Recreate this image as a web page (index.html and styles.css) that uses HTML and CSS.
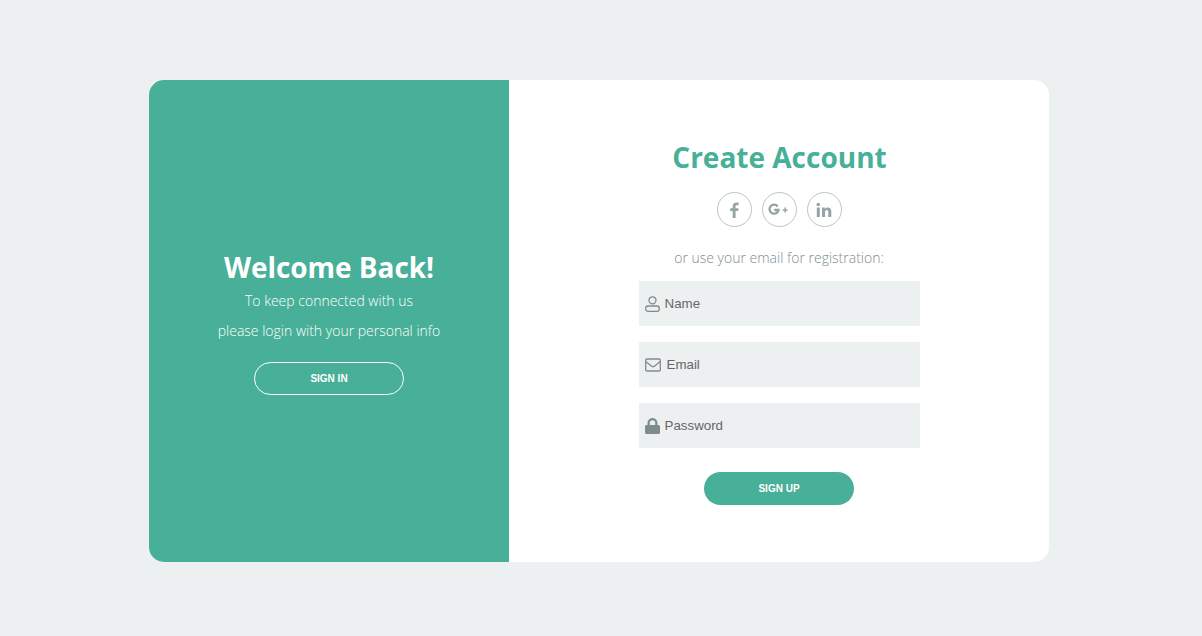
FILE: index.html
```html
<!DOCTYPE html>
<html lang="en">
<head>
<meta charset="utf-8">
<title>Create Account</title>
<link rel="stylesheet" href="styles.css">
</head>
<body>
<main class="card">
  <section class="welcome">
    <h2 class="welcome-title">Welcome Back!</h2>
    <p class="welcome-text">To keep connected with us</p>
    <p class="welcome-text">please login with your personal info</p>
    <button class="btn btn-ghost" type="button">SIGN IN</button>
  </section>
  <section class="signup">
    <h1 class="signup-title">Create Account</h1>
    <div class="socials">
      <a class="social" href="#" aria-label="Facebook">
        <svg viewBox="0 0 20 20" width="20" height="20"><path d="M11.6 18v-7h2.5l.4-2.8h-2.9V6.500c0-.8.3-1.300 1.400-1.300h1.600V2.700c-.3 0-1.200-.1-2.200-.1-2.200 0-3.700 1.300-3.700 3.700v1.900H6.200V11h2.500v7z"/></svg>
      </a>
      <a class="social" href="#" aria-label="Google Plus">
        <svg class="gplus" viewBox="0 0 22 22" width="22" height="22"><path d="M9.700 7.500A4.500 4.500 0 1 0 10.500 11H6.200"/><path d="M17.200 8.600v4.800M14.800 11h4.800" stroke-width="1.500"/></svg>
      </a>
      <a class="social" href="#" aria-label="LinkedIn">
        <svg viewBox="0 0 20 20" width="20" height="20"><circle cx="4.300" cy="4.500" r="1.800"/><path d="M2.800 7.600h3V17h-3zM8 7.600h2.900v1.300c.5-.9 1.600-1.500 2.900-1.500 2.700 0 3.500 1.700 3.500 4.300V17h-3v-4.700c0-1.200-.3-2.200-1.500-2.200-1.300 0-1.800 1-1.800 2.200V17H8z"/></svg>
      </a>
    </div>
    <p class="hint">or use your email for registration:</p>
    <form class="form">
      <label class="field">
        <svg class="field-icon" viewBox="0 0 15 16" width="15" height="16"><circle cx="7.500" cy="4.300" r="3.500"/><rect x=".7" y="10" width="13.600" height="5.300" rx="2.300"/></svg>
        <input class="field-input" type="text" placeholder="Name">
      </label>
      <label class="field">
        <svg class="field-icon field-icon-wide" viewBox="0 0 16 14" width="16" height="14"><rect x=".7" y="1" width="14.600" height="12" rx="1.300"/><path d="M1 3.800l5.700 4.400c.8.600 1.800.6 2.600 0L15 3.800"/></svg>
        <input class="field-input" type="email" placeholder="Email">
      </label>
      <label class="field">
        <svg class="field-icon-solid" viewBox="0 0 15 16" width="15" height="16"><path d="M2.500 7V5a5 5 0 0 1 10 0v2h1c.8 0 1.500.7 1.500 1.500v6c0 .8-.7 1.500-1.500 1.500H1.500C.7 16 0 15.300 0 14.500v-6C0 7.700.7 7 1.500 7zm2.300 0h5.400V5a2.700 2.700 0 0 0-5.400 0z"/></svg>
        <input class="field-input" type="password" placeholder="Password">
      </label>
      <button class="btn btn-solid" type="button">SIGN UP</button>
    </form>
  </section>
</main>
</body>
</html>
```

FILE: styles.css
```css
* { box-sizing: border-box; }

html, body { margin: 0; height: 100%; }

body {
  background: #ecf0f1;
  padding: 80px 0 0 149px;
  overflow: hidden;
  font-family: "Open Sans", sans-serif;
}

.card {
  display: flex;
  width: 900px;
  height: 482px;
  border-radius: 15px;
  overflow: hidden;
  background: #fff;
}

.welcome {
  flex: 0 0 360px;
  display: flex;
  flex-direction: column;
  align-items: center;
  padding-top: 168px;
  background: #48af98;
  color: #fff;
}

.welcome-title {
  margin: 0;
  font-size: 28px;
  line-height: 38px;
  font-weight: 700;
  letter-spacing: -0.05px;
}

.welcome-text {
  margin: 0;
  font-size: 14px;
  line-height: 30px;
  font-weight: 300;
}

.btn {
  display: block;
  width: 150px;
  height: 33px;
  padding: 0;
  border-radius: 17px;
  font-family: "Liberation Sans", Arial, sans-serif;
  font-size: 10px;
  font-weight: 700;
  color: #fff;
}

.btn-ghost {
  margin-top: 16px;
  background: transparent;
  border: 1px solid #fff;
}

.btn-solid {
  align-self: flex-start;
  margin: 8px 0 0 65px;
  background: #48af98;
  border: 0;
}

.signup {
  flex: 1;
  display: flex;
  flex-direction: column;
  align-items: center;
  padding-top: 56px;
}

.signup-title {
  margin: 0 0 0 1px;
  font-size: 28px;
  line-height: 42px;
  font-weight: 700;
  color: #48af98;
}

.socials {
  display: flex;
  gap: 10px;
  margin-top: 14px;
}

.social {
  display: flex;
  align-items: center;
  justify-content: center;
  width: 35px;
  height: 35px;
  border: 1px solid #bcc5c5;
  border-radius: 50%;
  fill: #95a5a6;
}

.gplus {
  fill: none;
  stroke: #95a5a6;
  stroke-width: 2.3;
}

.hint {
  margin: 19px 0 0;
  font-size: 14px;
  line-height: 24px;
  font-weight: 300;
  color: #7f8c8d;
}

.form {
  display: flex;
  flex-direction: column;
  gap: 16px;
  width: 281px;
  margin: 11px 0 0 1px;
}

.field {
  display: flex;
  align-items: center;
  gap: 5px;
  height: 45px;
  padding: 0 0 0 5.5px;
  background: #ecf0f1;
}

.field-icon {
  flex: none;
  fill: none;
  stroke: #7f8c8d;
  stroke-width: 1.3;
}

.field-icon-wide { margin-right: 1px; }

.field-icon-solid {
  flex: none;
  fill: #7f8c8d;
}

.field-input {
  flex: 1;
  min-width: 0;
  padding: 0;
  border: 0;
  outline: 0;
  background: transparent;
  font-family: "Liberation Sans", Arial, sans-serif;
  font-size: 13.33px;
  color: #666;
}

.field-input::placeholder { color: #666; opacity: 1; }
```
